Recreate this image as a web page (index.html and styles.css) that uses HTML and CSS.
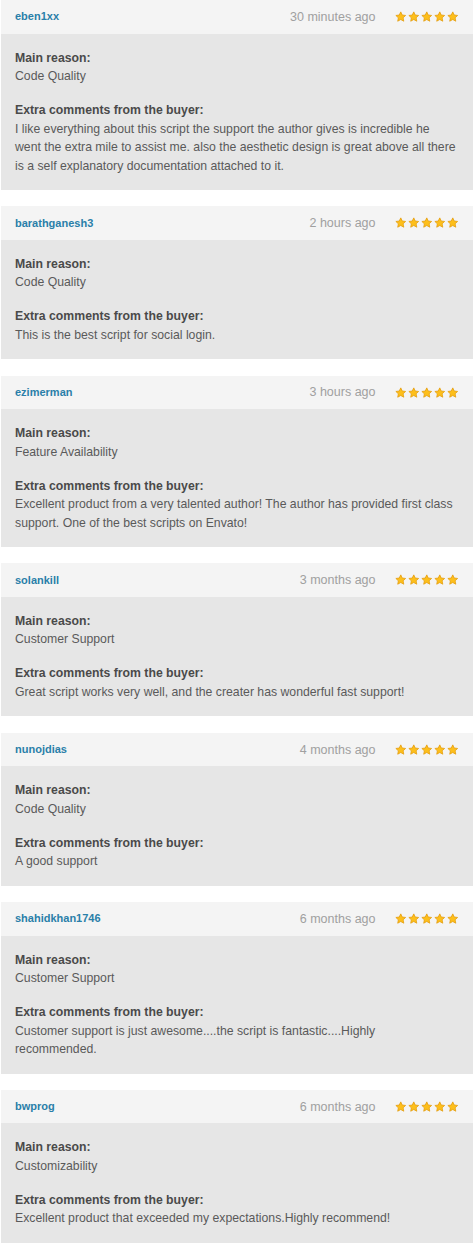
FILE: index.html
```html
<!DOCTYPE html>
<html>
<head>
<meta charset="utf-8">
<link rel="stylesheet" href="styles.css">
</head>
<body>
<svg width="0" height="0" class="defs">
  <defs>
    <symbol id="star" viewBox="0 0 24 24">
      <path d="M12 1.8l3.1 6.6 7.1.9-5.2 4.9 1.3 7.1L12 17.8l-6.3 3.5 1.3-7.1-5.2-4.9 7.1-.9z" fill="#fdbf1b" stroke="#e39b0c" stroke-width="1.6" stroke-linejoin="round"/>
    </symbol>
  </defs>
</svg>
<div class="list">

  <div class="review">
    <div class="review-head">
      <span class="user">eben1xx</span>
      <span class="time">30 minutes ago</span>
      <span class="stars"><svg><use href="#star"/></svg><svg><use href="#star"/></svg><svg><use href="#star"/></svg><svg><use href="#star"/></svg><svg><use href="#star"/></svg></span>
    </div>
    <div class="review-body">
      <div class="label">Main reason:</div>
      <div class="text">Code Quality</div>
      <div class="label gap">Extra comments from the buyer:</div>
      <div class="text">I like everything about this script the support the author gives is incredible he went the extra mile to assist me. also the aesthetic design is great above all there is a self explanatory documentation attached to it.</div>
    </div>
  </div>

  <div class="review">
    <div class="review-head">
      <span class="user">barathganesh3</span>
      <span class="time">2 hours ago</span>
      <span class="stars"><svg><use href="#star"/></svg><svg><use href="#star"/></svg><svg><use href="#star"/></svg><svg><use href="#star"/></svg><svg><use href="#star"/></svg></span>
    </div>
    <div class="review-body">
      <div class="label">Main reason:</div>
      <div class="text">Code Quality</div>
      <div class="label gap">Extra comments from the buyer:</div>
      <div class="text">This is the best script for social login.</div>
    </div>
  </div>

  <div class="review">
    <div class="review-head">
      <span class="user">ezimerman</span>
      <span class="time">3 hours ago</span>
      <span class="stars"><svg><use href="#star"/></svg><svg><use href="#star"/></svg><svg><use href="#star"/></svg><svg><use href="#star"/></svg><svg><use href="#star"/></svg></span>
    </div>
    <div class="review-body">
      <div class="label">Main reason:</div>
      <div class="text">Feature Availability</div>
      <div class="label gap">Extra comments from the buyer:</div>
      <div class="text">Excellent product from a very talented author! The author has provided first class support. One of the best scripts on Envato!</div>
    </div>
  </div>

  <div class="review">
    <div class="review-head">
      <span class="user">solankill</span>
      <span class="time">3 months ago</span>
      <span class="stars"><svg><use href="#star"/></svg><svg><use href="#star"/></svg><svg><use href="#star"/></svg><svg><use href="#star"/></svg><svg><use href="#star"/></svg></span>
    </div>
    <div class="review-body">
      <div class="label">Main reason:</div>
      <div class="text">Customer Support</div>
      <div class="label gap">Extra comments from the buyer:</div>
      <div class="text">Great script works very well, and the creater has wonderful fast support!</div>
    </div>
  </div>

  <div class="review">
    <div class="review-head">
      <span class="user">nunojdias</span>
      <span class="time">4 months ago</span>
      <span class="stars"><svg><use href="#star"/></svg><svg><use href="#star"/></svg><svg><use href="#star"/></svg><svg><use href="#star"/></svg><svg><use href="#star"/></svg></span>
    </div>
    <div class="review-body">
      <div class="label">Main reason:</div>
      <div class="text">Code Quality</div>
      <div class="label gap">Extra comments from the buyer:</div>
      <div class="text">A good support</div>
    </div>
  </div>

  <div class="review">
    <div class="review-head">
      <span class="user">shahidkhan1746</span>
      <span class="time">6 months ago</span>
      <span class="stars"><svg><use href="#star"/></svg><svg><use href="#star"/></svg><svg><use href="#star"/></svg><svg><use href="#star"/></svg><svg><use href="#star"/></svg></span>
    </div>
    <div class="review-body">
      <div class="label">Main reason:</div>
      <div class="text">Customer Support</div>
      <div class="label gap">Extra comments from the buyer:</div>
      <div class="text">Customer support is just awesome....the script is fantastic....Highly recommended.</div>
    </div>
  </div>

  <div class="review">
    <div class="review-head">
      <span class="user">bwprog</span>
      <span class="time">6 months ago</span>
      <span class="stars"><svg><use href="#star"/></svg><svg><use href="#star"/></svg><svg><use href="#star"/></svg><svg><use href="#star"/></svg><svg><use href="#star"/></svg></span>
    </div>
    <div class="review-body">
      <div class="label">Main reason:</div>
      <div class="text">Customizability</div>
      <div class="label gap">Extra comments from the buyer:</div>
      <div class="text">Excellent product that exceeded my expectations.Highly recommend!</div>
    </div>
  </div>

</div>
</body>
</html>
```

FILE: styles.css
```css
html, body {
  margin: 0;
  padding: 0;
  background: #ffffff;
}
body {
  font-family: "Liberation Sans", Arial, sans-serif;
}
.defs {
  position: absolute;
  width: 0;
  height: 0;
}
.list {
  display: flex;
  flex-direction: column;
  gap: 16.33px;
  margin-left: 1px;
  width: 472px;
}
.review-head {
  height: 33.5px;
  background: #f4f4f4;
  display: flex;
  align-items: center;
  padding: 0 15px 0 14px;
  box-sizing: border-box;
}
.user {
  font-weight: bold;
  font-size: 11px;
  color: #2a7fa9;
  flex: 1;
  margin-top: -1px;
}
.time {
  font-size: 12.5px;
  color: #a0a0a0;
  margin-right: 19px;
}
.stars {
  display: flex;
  gap: 1.5px;
}
.stars svg {
  width: 11.5px;
  height: 11.5px;
}
.review-body {
  background: #e6e6e6;
  padding: 15px 15px 15px 14px;
  font-size: 12.25px;
  line-height: 18.5px;
}
.label {
  font-weight: bold;
  color: #4a4a4a;
}
.label.gap {
  margin-top: 15.5px;
}
.text {
  color: #5a5a5a;
}
```
